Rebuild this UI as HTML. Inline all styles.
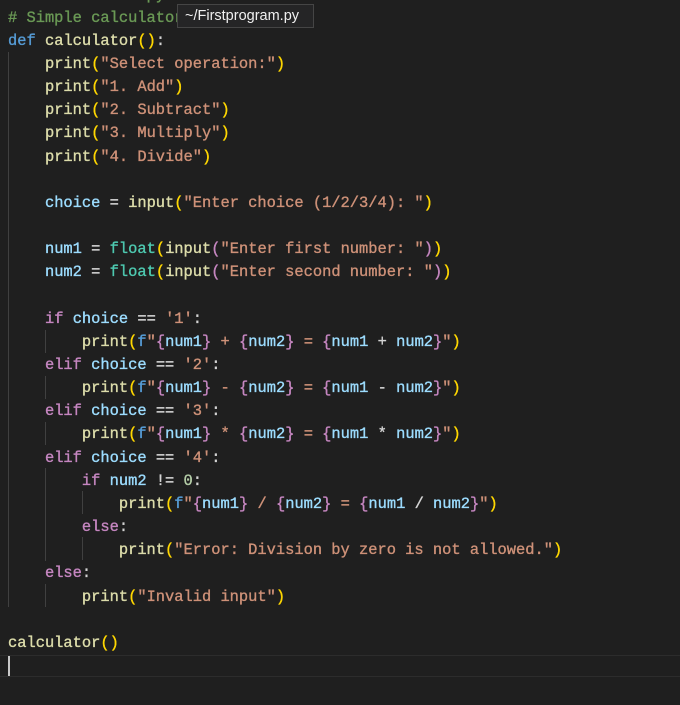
<!DOCTYPE html>
<html><head><meta charset="utf-8"><style>
html,body{margin:0;padding:0;background:#1f1f1f;width:680px;height:705px;overflow:hidden}
#code{position:absolute;left:8px;top:-16.5px;font-family:"Liberation Mono",monospace;font-size:15.4px;line-height:23.15px;color:#d4d4d4;white-space:pre;-webkit-text-stroke:0.35px currentColor}
.c{color:#6a9955}.k{color:#569cd6}.f{color:#dcdcaa}.s{color:#ce9178}.p{color:#ffd700}.v{color:#9cdcfe}.m{color:#c586c0}.t{color:#4ec9b0}.n{color:#b5cea8}.o{color:#d4d4d4}
.g{position:absolute;width:1px;background:#404040}
#tip{position:absolute;left:177px;top:4px;width:137px;height:24px;background:#252526;border:1px solid #454545;box-sizing:border-box;color:#f0f0f0;font-family:"Liberation Sans",sans-serif;font-size:14.5px;line-height:22px;padding-left:7px}
#cur{position:absolute;left:0;top:655px;width:680px;height:22px;border-top:1px solid #2c2c2c;border-bottom:1px solid #2c2c2c;box-sizing:border-box}
#caret{position:absolute;left:8px;top:656px;width:2px;height:20px;background:#c8c8c8}
</style></head><body>
<div id="cur"></div>
<div class="g" style="left:8px;top:52px;height:555px"></div>
<div class="g" style="left:45px;top:330px;height:23px"></div>
<div class="g" style="left:45px;top:376px;height:23px"></div>
<div class="g" style="left:45px;top:422px;height:23px"></div>
<div class="g" style="left:45px;top:468px;height:93px"></div>
<div class="g" style="left:45px;top:584px;height:23px"></div>
<div class="g" style="left:82px;top:491px;height:23px"></div>
<div class="g" style="left:82px;top:537px;height:23px"></div>
<div id="code"><span class="c">#!/usr/bin/env python3</span>
<span class="c"># Simple calculator program</span>
<span class="k">def</span> <span class="f">calculator</span><span class="p">()</span>:
    <span class="f">print</span><span class="p">(</span><span class="s">"Select operation:"</span><span class="p">)</span>
    <span class="f">print</span><span class="p">(</span><span class="s">"1. Add"</span><span class="p">)</span>
    <span class="f">print</span><span class="p">(</span><span class="s">"2. Subtract"</span><span class="p">)</span>
    <span class="f">print</span><span class="p">(</span><span class="s">"3. Multiply"</span><span class="p">)</span>
    <span class="f">print</span><span class="p">(</span><span class="s">"4. Divide"</span><span class="p">)</span>

    <span class="v">choice</span> = <span class="f">input</span><span class="p">(</span><span class="s">"Enter choice (1/2/3/4): "</span><span class="p">)</span>

    <span class="v">num1</span> = <span class="t">float</span><span class="p">(</span><span class="f">input</span><span class="m">(</span><span class="s">"Enter first number: "</span><span class="m">)</span><span class="p">)</span>
    <span class="v">num2</span> = <span class="t">float</span><span class="p">(</span><span class="f">input</span><span class="m">(</span><span class="s">"Enter second number: "</span><span class="m">)</span><span class="p">)</span>

    <span class="m">if</span> <span class="v">choice</span> == <span class="s">'1'</span>:
        <span class="f">print</span><span class="p">(</span><span class="k">f</span><span class="s">"</span><span class="m">{</span><span class="v">num1</span><span class="m">}</span><span class="s"> + </span><span class="m">{</span><span class="v">num2</span><span class="m">}</span><span class="s"> = </span><span class="m">{</span><span class="v">num1</span> + <span class="v">num2</span><span class="m">}</span><span class="s">"</span><span class="p">)</span>
    <span class="m">elif</span> <span class="v">choice</span> == <span class="s">'2'</span>:
        <span class="f">print</span><span class="p">(</span><span class="k">f</span><span class="s">"</span><span class="m">{</span><span class="v">num1</span><span class="m">}</span><span class="s"> - </span><span class="m">{</span><span class="v">num2</span><span class="m">}</span><span class="s"> = </span><span class="m">{</span><span class="v">num1</span> - <span class="v">num2</span><span class="m">}</span><span class="s">"</span><span class="p">)</span>
    <span class="m">elif</span> <span class="v">choice</span> == <span class="s">'3'</span>:
        <span class="f">print</span><span class="p">(</span><span class="k">f</span><span class="s">"</span><span class="m">{</span><span class="v">num1</span><span class="m">}</span><span class="s"> * </span><span class="m">{</span><span class="v">num2</span><span class="m">}</span><span class="s"> = </span><span class="m">{</span><span class="v">num1</span> * <span class="v">num2</span><span class="m">}</span><span class="s">"</span><span class="p">)</span>
    <span class="m">elif</span> <span class="v">choice</span> == <span class="s">'4'</span>:
        <span class="m">if</span> <span class="v">num2</span> != <span class="n">0</span>:
            <span class="f">print</span><span class="p">(</span><span class="k">f</span><span class="s">"</span><span class="m">{</span><span class="v">num1</span><span class="m">}</span><span class="s"> / </span><span class="m">{</span><span class="v">num2</span><span class="m">}</span><span class="s"> = </span><span class="m">{</span><span class="v">num1</span> / <span class="v">num2</span><span class="m">}</span><span class="s">"</span><span class="p">)</span>
        <span class="m">else</span>:
            <span class="f">print</span><span class="p">(</span><span class="s">"Error: Division by zero is not allowed."</span><span class="p">)</span>
    <span class="m">else</span>:
        <span class="f">print</span><span class="p">(</span><span class="s">"Invalid input"</span><span class="p">)</span>

<span class="f">calculator</span><span class="p">()</span>
</div>
<div id="tip">~/Firstprogram.py</div>
<div id="caret"></div>
</body></html>
